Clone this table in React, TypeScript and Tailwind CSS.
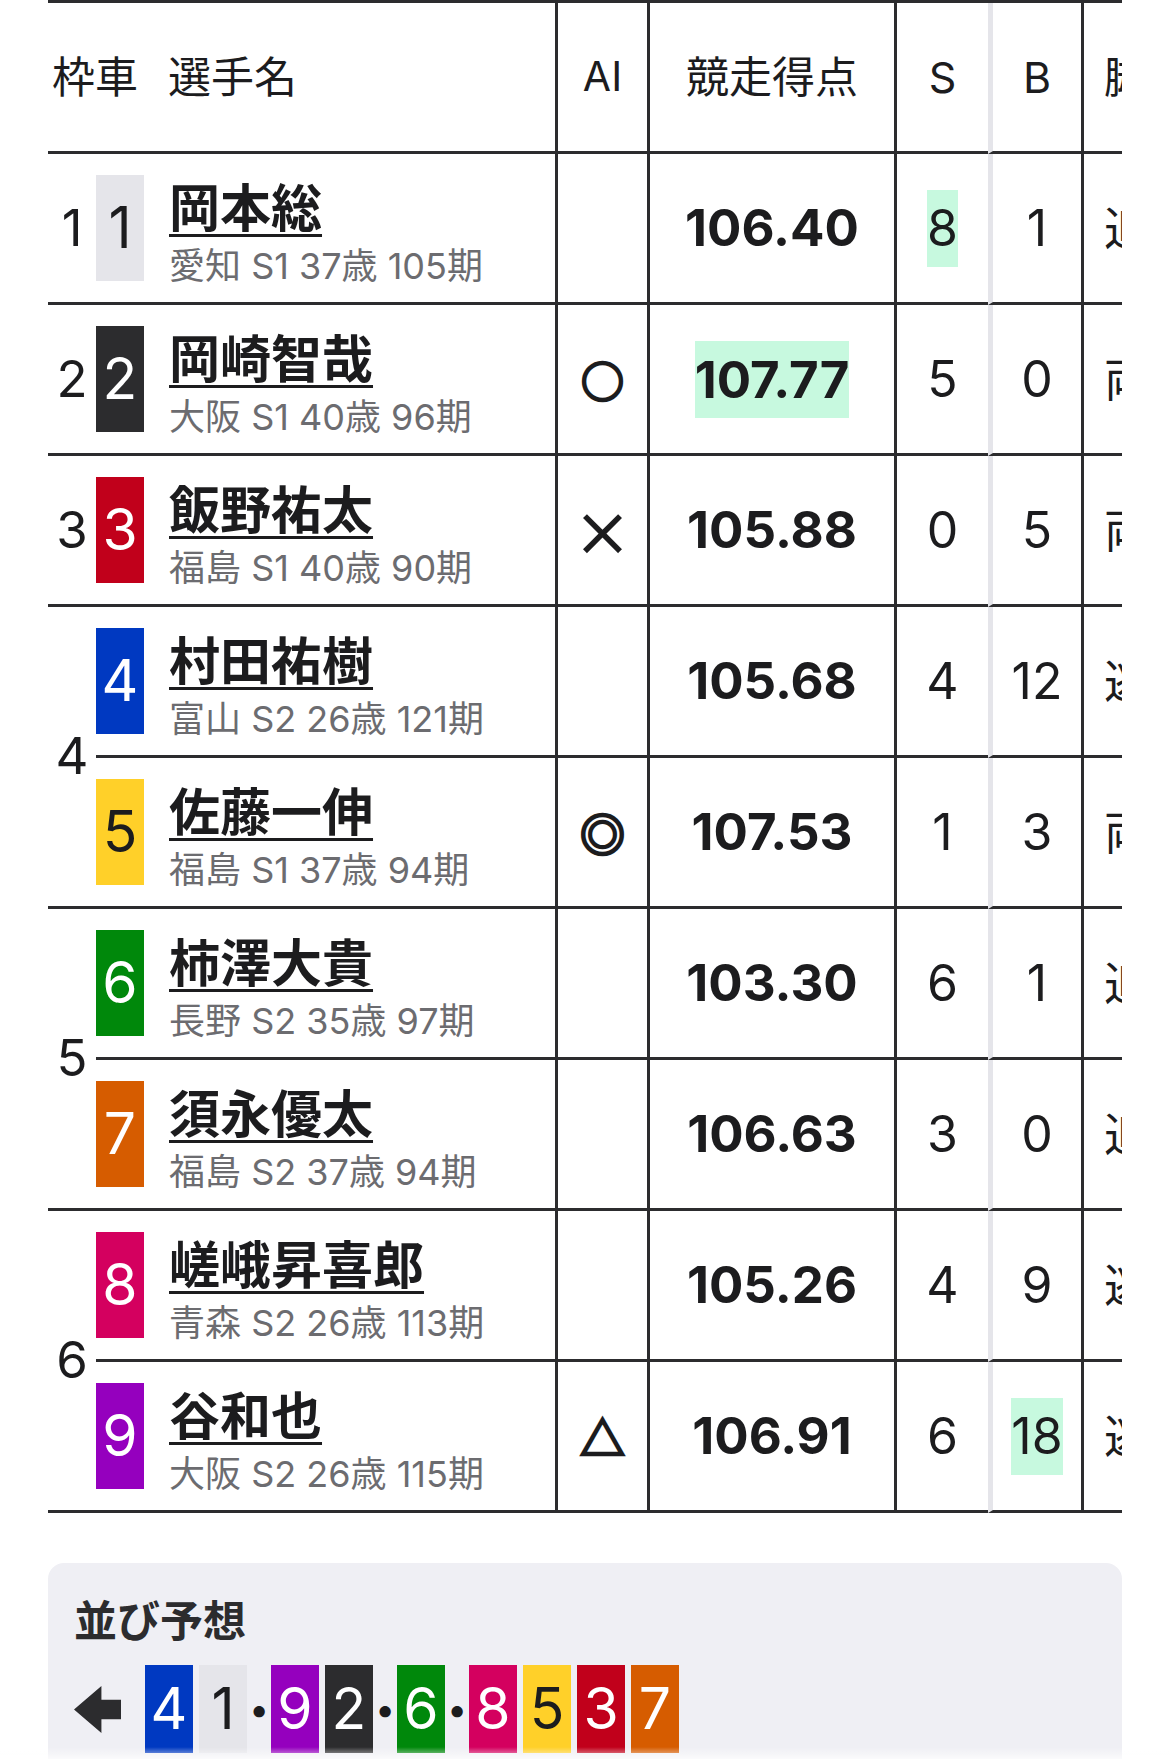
import React from 'react';

type Racer = {
  car: number;
  name: string;
  info: string;
  ai: string;
  score: string;
  s: string;
  b: string;
  style: string;
  hi?: 'score' | 's' | 'b';
};

const CAR_BOX: Record<number, string> = {
  1: 'bg-[#e5e5ea] text-[#1c1c1e]',
  2: 'bg-[#2c2c2e] text-white',
  3: 'bg-[#c1001b] text-white',
  4: 'bg-[#0039c1] text-white',
  5: 'bg-[#ffd029] text-[#1c1c1e]',
  6: 'bg-[#00880b] text-white',
  7: 'bg-[#d65c00] text-white',
  8: 'bg-[#d4005f] text-white',
  9: 'bg-[#9500be] text-white',
};

// AI予想マーク: the CJK font draws these thin, so thicken with a text stroke
const MARK_STYLE: Record<string, string> = {
  '○': 'text-[43px] [-webkit-text-stroke:2.5px_#1c1c1e]',
  '×': 'text-[57px] font-normal [-webkit-text-stroke:1.6px_#1c1c1e]',
  '◎': 'text-[45px] [-webkit-text-stroke:2.5px_#1c1c1e]',
  '△': 'text-[45px] [-webkit-text-stroke:2.5px_#1c1c1e]',
};

const racers: Record<number, Racer> = {
  1: { car: 1, name: '岡本総', info: '愛知 S1 37歳 105期', ai: '', score: '106.40', s: '8', b: '1', style: '追', hi: 's' },
  2: { car: 2, name: '岡崎智哉', info: '大阪 S1 40歳 96期', ai: '○', score: '107.77', s: '5', b: '0', style: '両', hi: 'score' },
  3: { car: 3, name: '飯野祐太', info: '福島 S1 40歳 90期', ai: '×', score: '105.88', s: '0', b: '5', style: '両' },
  4: { car: 4, name: '村田祐樹', info: '富山 S2 26歳 121期', ai: '', score: '105.68', s: '4', b: '12', style: '逃' },
  5: { car: 5, name: '佐藤一伸', info: '福島 S1 37歳 94期', ai: '◎', score: '107.53', s: '1', b: '3', style: '両' },
  6: { car: 6, name: '柿澤大貴', info: '長野 S2 35歳 97期', ai: '', score: '103.30', s: '6', b: '1', style: '追' },
  7: { car: 7, name: '須永優太', info: '福島 S2 37歳 94期', ai: '', score: '106.63', s: '3', b: '0', style: '追' },
  8: { car: 8, name: '嵯峨昇喜郎', info: '青森 S2 26歳 113期', ai: '', score: '105.26', s: '4', b: '9', style: '逃' },
  9: { car: 9, name: '谷和也', info: '大阪 S2 26歳 115期', ai: '△', score: '106.91', s: '6', b: '18', style: '逃', hi: 'b' },
};

const frames = [
  { no: 1, cars: [1] },
  { no: 2, cars: [2] },
  { no: 3, cars: [3] },
  { no: 4, cars: [4, 5] },
  { no: 5, cars: [6, 7] },
  { no: 6, cars: [8, 9] },
];

// 並び予想: groups separated by a dot
const lineup = [[4, 1], [9, 2], [6], [8, 5, 3, 7]];

const cell = 'border-b-[3px] border-[#2c2c2e] flex items-center';
const lineL = 'border-l-[3px]';

function Hi({ on, children }: { on: boolean; children: React.ReactNode }) {
  if (!on) return <>{children}</>;
  return <span className="inline-block bg-[#c7f9df] leading-[77px]">{children}</span>;
}

function RacerRow({ r }: { r: Racer }) {
  return (
    <>
      <div className={`${cell} justify-center`}>
        <div className={`w-[48px] h-[106px] flex items-center justify-center text-[57px] ${CAR_BOX[r.car]}`}>
          {r.car}
        </div>
      </div>
      <div className={`${cell} flex-col !items-start justify-center pl-[25px]`}>
        <div className="text-[51px] leading-[76px] font-bold underline decoration-[3px] underline-offset-[7px]">
          {r.name}
        </div>
        <div className="text-[36px] leading-[39px] text-[#6c6c70]">{r.info}</div>
      </div>
      <div className={`${cell} ${lineL} justify-center`}>
        {r.ai && (
          <span className={`font-['Noto_Sans_CJK_JP',sans-serif] font-bold leading-none ${MARK_STYLE[r.ai]}`}>
            {r.ai}
          </span>
        )}
      </div>
      <div className={`${cell} ${lineL} justify-center text-[51px] font-bold`}>
        <Hi on={r.hi === 'score'}>{r.score}</Hi>
      </div>
      <div className={`${cell} ${lineL} justify-center text-[50px]`}>
        <Hi on={r.hi === 's'}>{r.s}</Hi>
      </div>
      <div className={`${cell} border-l-[5px] border-l-[#e5e5ea] justify-center text-[50px]`}>
        <Hi on={r.hi === 'b'}>{r.b}</Hi>
      </div>
      <div className={`${cell} ${lineL} pl-[20px] text-[46px]`}>{r.style}</div>
    </>
  );
}

export default function App() {
  return (
    <div className="min-h-screen bg-white px-12 text-[#1c1c1e] font-[Inter,'Noto_Sans_CJK_JP',sans-serif]">
      <div className="overflow-hidden">
        <div className="grid w-max grid-cols-[48px_48px_411px_92px_247px_94px_93px_130px] auto-rows-[151px] border-t-[3px] border-[#2c2c2e]">
          {/* header */}
          <div className={`${cell} col-span-2 pl-[4px] text-[43px]`}>枠車</div>
          <div className={`${cell} pl-[24px] text-[43px]`}>選手名</div>
          <div className={`${cell} ${lineL} justify-center text-[41px]`}>AI</div>
          <div className={`${cell} ${lineL} justify-center text-[43px]`}>競走得点</div>
          <div className={`${cell} ${lineL} justify-center text-[43px]`}>S</div>
          <div className={`${cell} border-l-[5px] border-l-[#e5e5ea] justify-center text-[43px]`}>B</div>
          <div className={`${cell} ${lineL} pl-[20px] text-[43px]`}>脚質</div>

          {frames.map((f) =>
            f.cars.map((c, i) => (
              <React.Fragment key={c}>
                {i === 0 && (
                  <div className={`${cell} justify-center text-[51px] ${f.cars.length === 2 ? 'row-span-2' : ''}`}>
                    {f.no}
                  </div>
                )}
                <RacerRow r={racers[c]} />
              </React.Fragment>
            ))
          )}
        </div>
      </div>

      {/* 並び予想 */}
      <div className="mt-[50px] rounded-[16px] bg-[#efeff4] pl-[26px] pt-[26px] pb-[40px]">
        <div className="text-[43px] leading-[64px] font-bold text-[#2c2c2e]">並び予想</div>
        <div className="mt-[12px] flex items-center">
          <svg width="47" height="47" viewBox="0 0 48 48" className="mr-[24px] shrink-0">
            <polygon points="0,24 28,0 28,14 48,14 48,34 28,34 28,48" fill="#2c2c2e" />
          </svg>
          {lineup.map((g, gi) => (
            <React.Fragment key={gi}>
              {gi > 0 && (
                <div className="w-[24px] flex items-center justify-center text-[36px] leading-none">•</div>
              )}
              <div className="flex gap-[6px]">
                {g.map((c) => (
                  <div
                    key={c}
                    className={`w-[48px] h-[88px] flex items-center justify-center text-[57px] ${CAR_BOX[c]}`}
                  >
                    {c}
                  </div>
                ))}
              </div>
            </React.Fragment>
          ))}
        </div>
      </div>

      <div className="pointer-events-none fixed inset-x-0 bottom-0 h-[12px] bg-gradient-to-t from-white/70 to-white/0" />
    </div>
  );
}
